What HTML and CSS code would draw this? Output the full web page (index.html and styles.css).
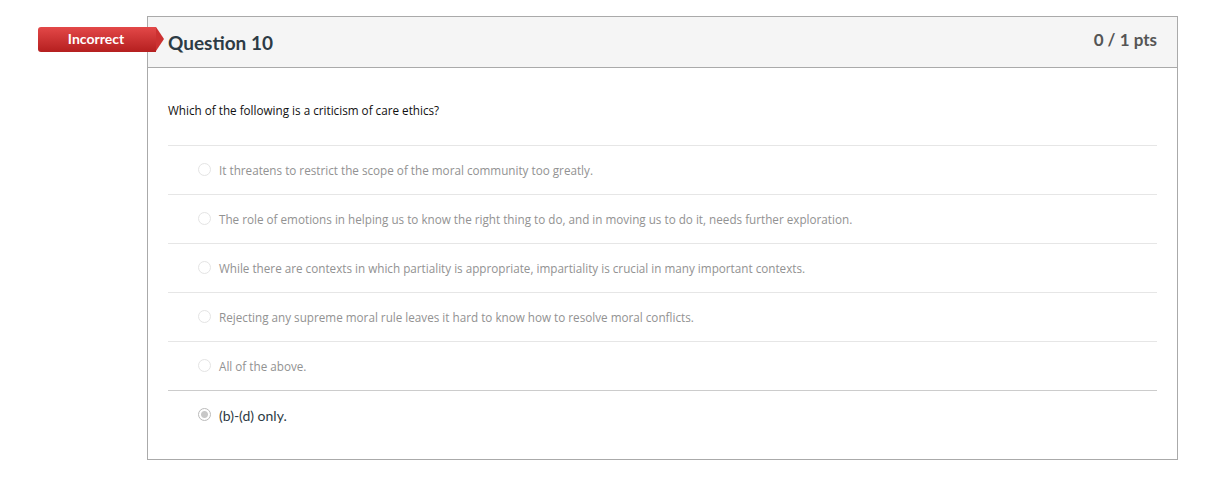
FILE: index.html
```html
<!DOCTYPE html>
<html lang="en">
<head>
    <meta charset="UTF-8">
    <title>Question 10</title>
    <link rel="stylesheet" href="styles.css">
</head>
<body>
    <div class="page">
        <div class="question">
            <div class="flag">Incorrect</div>
            <div class="header">
                <h2 class="title">Question 10</h2>
                <span class="pts">0 / 1 pts</span>
            </div>
            <div class="body">
                <p class="text">Which of the following is a criticism of care ethics?</p>
                <div class="answers">
                    <div class="answer"><span class="radio"></span>It threatens to restrict the scope of the moral community too greatly.</div>
                    <div class="answer"><span class="radio"></span>The role of emotions in helping us to know the right thing to do, and in moving us to do it, needs further exploration.</div>
                    <div class="answer"><span class="radio"></span>While there are contexts in which partiality is appropriate, impartiality is crucial in many important contexts.</div>
                    <div class="answer"><span class="radio"></span>Rejecting any supreme moral rule leaves it hard to know how to resolve moral conflicts.</div>
                    <div class="answer"><span class="radio"></span>All of the above.</div>
                    <div class="answer selected"><span class="radio"></span>(b)-(d) only.</div>
                </div>
            </div>
        </div>
    </div>
</body>
</html>
```
FILE: styles.css
```css
body {
    margin: 0;
    background: #fff;
    font-family: Lato, "Open Sans", sans-serif;
    color: #2d3b45;
}
.page {
    padding: 16px 0 0 147px;
    width: 1031px;
}
.question {
    position: relative;
    border: 1px solid #aaa;
    background: #fff;
}
.flag {
    position: absolute;
    left: -110px;
    top: 10px;
    width: 118px;
    height: 25px;
    line-height: 23px;
    text-align: center;
    color: #fff;
    font-size: 14px;
    font-weight: bold;
    background: linear-gradient(#e34848, #b51f1f);
    border-radius: 3px 0 0 3px;
    box-sizing: border-box;
    text-indent: -2px;
}
.flag::after {
    content: '';
    position: absolute;
    right: -8px;
    top: 0;
    border-top: 12.5px solid transparent;
    border-bottom: 12.5px solid transparent;
    border-left: 8px solid #cc3131;
}
.header {
    display: flex;
    justify-content: space-between;
    align-items: flex-start;
    height: 50px;
    padding: 0 20px;
    background: #f5f5f5;
    border-bottom: 1px solid #aaa;
}
.title {
    margin: 14px 0 0;
    font-size: 19px;
    font-weight: bold;
    color: #2d3b45;
}
.pts {
    margin-top: 12px;
    font-size: 17px;
    font-weight: bold;
    color: #555;
}
.body {
    padding: 34px 20px 20px;
}
.text {
    margin: 0 0 27px;
    font-family: "Open Sans", sans-serif;
    font-size: 11.7px;
    line-height: 16px;
    color: #111;
}
.answer {
    display: flex;
    align-items: center;
    height: 48px;
    padding-left: 30px;
    border-top: 1px solid #e6e6e6;
    font-family: "Open Sans", sans-serif;
    font-size: 11.7px;
    color: #929292;
}
.radio {
    width: 13px;
    height: 13px;
    margin-right: 8px;
    border: 1px solid #e4e4e4;
    border-radius: 50%;
    box-sizing: border-box;
    position: relative;
    top: -1px;
}
.answer.selected {
    border-top: 1px solid #ccc;
    font-family: Lato, sans-serif;
    font-size: 14px;
    color: #2d3b45;
}
.answer.selected .radio {
    border-color: #bbb;
    background: radial-gradient(circle, #c8c8c8 3px, #fff 4px);
}
```
